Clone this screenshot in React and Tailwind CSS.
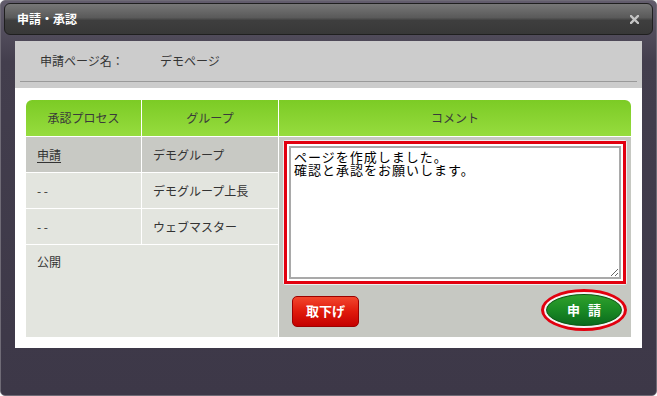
const font = { fontFamily: '"Noto Sans CJK JP", "Noto Sans", sans-serif' }

const Cell = ({ children, className = '' }) => (
    <div className={`flex items-center pl-[11px] text-[12px] text-[#333] ${className}`}>{children}</div>
)

const App = () => {
    return (
        <div style={font} className="w-[657px] h-[396px] overflow-hidden rounded-[5px] border border-[#6f6b76] bg-[linear-gradient(to_bottom,#625c6c_0px,#433e4d_60px,#3d3848_100%)] flex flex-col">
            <div className="mx-[3px] mt-[2px] h-[32px] shrink-0 rounded-[6px] border border-[#1f1f1f] bg-[linear-gradient(to_bottom,#777_0%,#5a5a5a_45%,#3e3e3e_55%,#383838_100%)] flex items-center justify-between pl-[12px] pr-[12px]">
                <span className="text-[12px] font-bold text-white">申請・承認</span>
                <svg width="9" height="9" viewBox="0 0 9 9" className="mr-[1px]">
                    <path d="M1 1 L8 8 M8 1 L1 8" stroke="#c4c4c4" strokeWidth="2.4" strokeLinecap="square" />
                </svg>
            </div>

            <div className="ml-[14px] mt-[6px] w-[627px] h-[307px] bg-white flex flex-col">
                <div className="h-[47px] bg-[#cccccc] px-[5px]">
                    <div className="h-[41px] border-b border-[#9a9a9a] flex items-center pl-[20px] text-[12px] text-[#333]">
                        <span className="w-[120px]">申請ページ名：</span>
                        <span>デモページ</span>
                    </div>
                </div>

                <div className="pt-[12px] px-[11px]">
                    <div className="grid grid-cols-[115px_136px_1fr] grid-rows-[36px_35px_35px_35px_92px] gap-px bg-white">
                        <div className="rounded-tl-[6px] bg-[linear-gradient(to_bottom,#7ccb25,#96dc3e)] flex items-center justify-center text-[12px] text-[#3a3a3a]">承認プロセス</div>
                        <div className="bg-[linear-gradient(to_bottom,#7ccb25,#96dc3e)] flex items-center justify-center text-[12px] text-[#3a3a3a]">グループ</div>
                        <div className="rounded-tr-[6px] bg-[linear-gradient(to_bottom,#7ccb25,#96dc3e)] flex items-center justify-center text-[12px] text-[#3a3a3a]">コメント</div>

                        <Cell className="bg-[#c8c9c4] underline underline-offset-2">申請</Cell>
                        <Cell className="bg-[#c8c9c4]">デモグループ</Cell>

                        <div className="row-span-4 col-start-3 row-start-2 bg-[#c6c8c2] flex flex-col pt-[3px] px-[4px]">
                            <div className="h-[145px] rounded-[3px] bg-[#eeeeee] p-px">
                                <div className="h-full border-[3px] border-[#e2000f] bg-white p-[2px]">
                                    <textarea
                                        style={font}
                                        defaultValue={'ページを作成しました。\n確認と承認をお願いします。'}
                                        className="block w-full h-full resize-y border-2 border-[#a9a9a9] bg-white px-[3px] pt-[2px] text-[13px] leading-[13px] tracking-[1px] text-black outline-none"
                                    />
                                </div>
                            </div>
                            <div className="flex-1 flex items-center justify-between pl-[9px]">
                                <button className="w-[67px] h-[31px] rounded-[5px] border border-[#9c0000] bg-[linear-gradient(to_bottom,#f2462e_0%,#e01a0c_50%,#c40000_100%)] text-[13px] font-bold text-white">取下げ</button>
                                <div className="w-[86px] h-[42px] rounded-[50%] border-[3px] border-[#e2000f] bg-[#f4f4f4] p-[2px] mb-[2px]">
                                    <button className="w-full h-full rounded-[50%] border border-[#0c5a14] bg-[linear-gradient(to_bottom,#2fa12c_0%,#1a8a24_50%,#0b6a1e_100%)] text-[13px] font-bold text-white tracking-[0.6em] pl-[0.6em]">申請</button>
                                </div>
                            </div>
                        </div>

                        <Cell className="bg-[#e3e5df]">- -</Cell>
                        <Cell className="bg-[#e3e5df]">デモグループ上長</Cell>
                        <Cell className="bg-[#e3e5df]">- -</Cell>
                        <Cell className="bg-[#e3e5df]">ウェブマスター</Cell>
                        <div className="col-span-2 bg-[#e3e5df] pl-[11px] pt-[8px] text-[12px] text-[#333]">公開</div>
                    </div>
                </div>
            </div>
        </div>
    )
}

export default App
